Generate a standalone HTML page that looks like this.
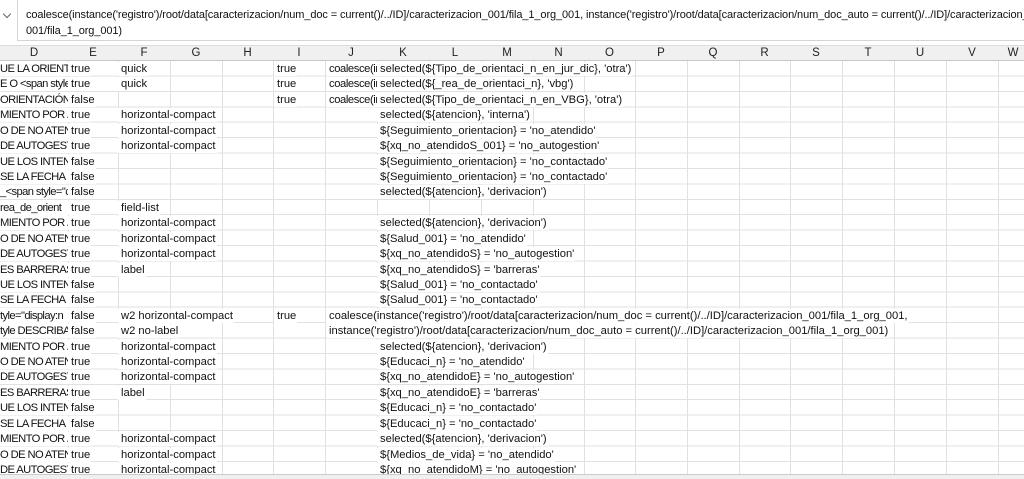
<!DOCTYPE html>
<html><head><meta charset="utf-8"><style>
*{margin:0;padding:0;box-sizing:border-box}
body{width:1024px;height:479px;overflow:hidden;background:#fff;font-family:"Liberation Sans",Arial,sans-serif;font-size:11.2px;color:#111;position:relative}
.fb{position:absolute;left:17px;top:0;width:1010px;height:41px;border:1px solid #d4d4d4;border-top:none;background:#fff;padding:8px 0 0 8px;line-height:15.5px;font-size:11px;white-space:nowrap;overflow:hidden;letter-spacing:-0.1px}
.chev{position:absolute;left:4px;top:11px;width:6px;height:6px;border-right:1px solid #666;border-bottom:1px solid #666;transform:rotate(45deg)}
.hdr{position:absolute;left:0;top:45px;width:1024px;height:16px;background:#f0f0f0;border-bottom:1px solid #c8c8c8;border-top:1px solid #ddd}
.hdr span{position:absolute;top:1px;text-align:center;font-size:11.5px;color:#222}
.grid{position:absolute;left:0;top:61px;width:1024px;height:414px;background-image:repeating-linear-gradient(to bottom,transparent 0,transparent 14.42px,#e1e1e1 14.42px,#e1e1e1 15.42px)}
.v{position:absolute;top:45px;width:1px;height:430px;background:#e1e1e1}
.r{position:absolute;left:0;height:15px;width:1024px;line-height:15px;white-space:nowrap}
.r span{position:absolute;top:0;background:#fff;padding:0 1px 0 3px;height:14px}
.d{left:0;width:68px;overflow:hidden;padding-left:0!important;letter-spacing:-0.6px}
.e{left:68px}
.f{left:118px}
.i{left:274px}
.j{left:326px;width:51px;overflow:hidden;letter-spacing:-0.4px}
.k{left:377px}
.jj{left:326px}
.bot{position:absolute;left:0;top:474px;width:1024px;height:5px;background:#f0f0f0;border-top:1px solid #ccc}
</style></head><body>
<div class="chev"></div>
<div class="fb">coalesce(instance('registro')/root/data[caracterizacion/num_doc = current()/../ID]/caracterizacion_001/fila_1_org_001, instance('registro')/root/data[caracterizacion/num_doc_auto = current()/../ID]/caracterizacion_<br>001/fila_1_org_001)</div>
<div class="grid"></div>
<div class="v" style="left:68px"></div><div class="v" style="left:118px"></div><div class="v" style="left:170px"></div><div class="v" style="left:222px"></div><div class="v" style="left:273px"></div><div class="v" style="left:325px"></div><div class="v" style="left:377px"></div><div class="v" style="left:429px"></div><div class="v" style="left:481px"></div><div class="v" style="left:533px"></div><div class="v" style="left:584px"></div><div class="v" style="left:635px"></div><div class="v" style="left:687px"></div><div class="v" style="left:739px"></div><div class="v" style="left:790px"></div><div class="v" style="left:842px"></div><div class="v" style="left:894px"></div><div class="v" style="left:946px"></div><div class="v" style="left:998px"></div>
<div class="hdr">
<span style="left:0;width:68px">D</span><span style="left:68px;width:50px">E</span><span style="left:118px;width:52px">F</span><span style="left:170px;width:52px">G</span><span style="left:222px;width:51px">H</span><span style="left:273px;width:52px">I</span><span style="left:325px;width:52px">J</span><span style="left:377px;width:52px">K</span><span style="left:429px;width:52px">L</span><span style="left:481px;width:52px">M</span><span style="left:533px;width:51px">N</span><span style="left:584px;width:51px">O</span><span style="left:635px;width:52px">P</span><span style="left:687px;width:52px">Q</span><span style="left:739px;width:51px">R</span><span style="left:790px;width:52px">S</span><span style="left:842px;width:52px">T</span><span style="left:894px;width:52px">U</span><span style="left:946px;width:52px">V</span><span style="left:998px;width:30px">W</span>
</div>

<div class="r" style="top:62px"><span class="d">UE LA ORIENTA</span><span class="e">true</span><span class="f">quick</span><span class="i">true</span><span class="j">coalesce(instance</span><span class="k">selected(${Tipo_de_orientaci_n_en_jur_dic}, 'otra')</span></div>
<div class="r" style="top:77.4px"><span class="d">E O &lt;span style</span><span class="e">true</span><span class="f">quick</span><span class="i">true</span><span class="j">coalesce(instance</span><span class="k">selected(${_rea_de_orientaci_n}, 'vbg')</span></div>
<div class="r" style="top:92.8px"><span class="d">ORIENTACIÓN</span><span class="e">false</span><span class="i">true</span><span class="j">coalesce(instance</span><span class="k">selected(${Tipo_de_orientaci_n_en_VBG}, 'otra')</span></div>
<div class="r" style="top:108.3px"><span class="d">MIENTO POR Á</span><span class="e">true</span><span class="f">horizontal-compact</span><span class="k">selected(${atencion}, 'interna')</span></div>
<div class="r" style="top:123.7px"><span class="d">O DE NO ATEN</span><span class="e">true</span><span class="f">horizontal-compact</span><span class="k">${Seguimiento_orientacion} = 'no_atendido'</span></div>
<div class="r" style="top:139.1px"><span class="d">DE AUTOGESTI</span><span class="e">true</span><span class="f">horizontal-compact</span><span class="k">${xq_no_atendidoS_001} = 'no_autogestion'</span></div>
<div class="r" style="top:154.5px"><span class="d">UE LOS INTEN</span><span class="e">false</span><span class="k">${Seguimiento_orientacion} = 'no_contactado'</span></div>
<div class="r" style="top:169.9px"><span class="d">SE LA FECHA EN</span><span class="e">false</span><span class="k">${Seguimiento_orientacion} = 'no_contactado'</span></div>
<div class="r" style="top:185.4px"><span class="d">_&lt;span style="c</span><span class="e">false</span><span class="k">selected(${atencion}, 'derivacion')</span></div>
<div class="r" style="top:200.8px"><span class="d">rea_de_orient</span><span class="e">true</span><span class="f">field-list</span></div>
<div class="r" style="top:216.2px"><span class="d">MIENTO POR Á</span><span class="e">true</span><span class="f">horizontal-compact</span><span class="k">selected(${atencion}, 'derivacion')</span></div>
<div class="r" style="top:231.6px"><span class="d">O DE NO ATEN</span><span class="e">true</span><span class="f">horizontal-compact</span><span class="k">${Salud_001} = 'no_atendido'</span></div>
<div class="r" style="top:247px"><span class="d">DE AUTOGESTI</span><span class="e">true</span><span class="f">horizontal-compact</span><span class="k">${xq_no_atendidoS} = 'no_autogestion'</span></div>
<div class="r" style="top:262.5px"><span class="d">ES BARRERAS?</span><span class="e">true</span><span class="f">label</span><span class="k">${xq_no_atendidoS} = 'barreras'</span></div>
<div class="r" style="top:277.9px"><span class="d">UE LOS INTEN</span><span class="e">false</span><span class="k">${Salud_001} = 'no_contactado'</span></div>
<div class="r" style="top:293.3px"><span class="d">SE LA FECHA EN</span><span class="e">false</span><span class="k">${Salud_001} = 'no_contactado'</span></div>
<div class="r" style="top:308.7px"><span class="d">tyle="display:n</span><span class="e">false</span><span class="f">w2 horizontal-compact</span><span class="i">true</span><span class="jj">coalesce(instance('registro')/root/data[caracterizacion/num_doc = current()/../ID]/caracterizacion_001/fila_1_org_001,</span></div>
<div class="r" style="top:324.1px"><span class="d">tyle DESCRIBA</span><span class="e">false</span><span class="f">w2 no-label</span><span class="jj">instance('registro')/root/data[caracterizacion/num_doc_auto = current()/../ID]/caracterizacion_001/fila_1_org_001)</span></div>
<div class="r" style="top:339.6px"><span class="d">MIENTO POR Á</span><span class="e">true</span><span class="f">horizontal-compact</span><span class="k">selected(${atencion}, 'derivacion')</span></div>
<div class="r" style="top:355px"><span class="d">O DE NO ATEN</span><span class="e">true</span><span class="f">horizontal-compact</span><span class="k">${Educaci_n} = 'no_atendido'</span></div>
<div class="r" style="top:370.4px"><span class="d">DE AUTOGESTI</span><span class="e">true</span><span class="f">horizontal-compact</span><span class="k">${xq_no_atendidoE} = 'no_autogestion'</span></div>
<div class="r" style="top:385.8px"><span class="d">ES BARRERAS?</span><span class="e">true</span><span class="f">label</span><span class="k">${xq_no_atendidoE} = 'barreras'</span></div>
<div class="r" style="top:401.2px"><span class="d">UE LOS INTEN</span><span class="e">false</span><span class="k">${Educaci_n} = 'no_contactado'</span></div>
<div class="r" style="top:416.7px"><span class="d">SE LA FECHA EN</span><span class="e">false</span><span class="k">${Educaci_n} = 'no_contactado'</span></div>
<div class="r" style="top:432.1px"><span class="d">MIENTO POR Á</span><span class="e">true</span><span class="f">horizontal-compact</span><span class="k">selected(${atencion}, 'derivacion')</span></div>
<div class="r" style="top:447.5px"><span class="d">O DE NO ATEN</span><span class="e">true</span><span class="f">horizontal-compact</span><span class="k">${Medios_de_vida} = 'no_atendido'</span></div>
<div class="r" style="top:462.9px"><span class="d">DE AUTOGESTI</span><span class="e">true</span><span class="f">horizontal-compact</span><span class="k">${xq_no_atendidoM} = 'no_autogestion'</span></div>
<div class="bot"></div>
</body></html>
